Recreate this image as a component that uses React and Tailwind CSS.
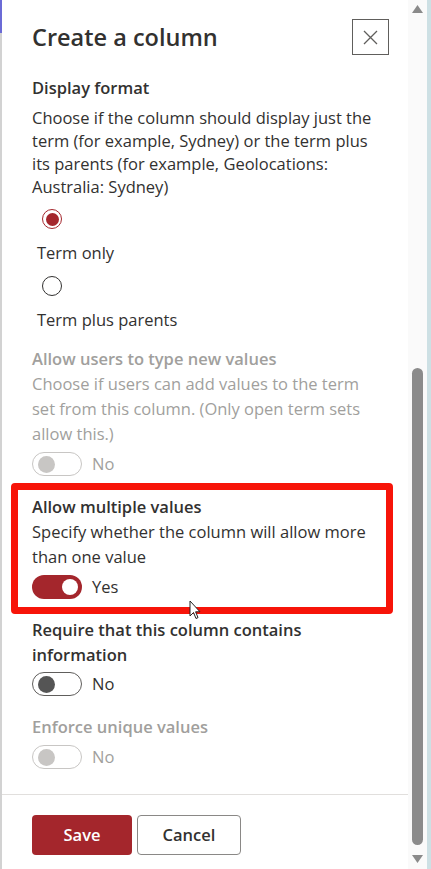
import React from "react";

const font = { fontFamily: '"Segoe UI", "Open Sans", "Noto Sans", sans-serif' };

function Toggle({ state }) {
  if (state === "on") {
    return (
      <div className="w-[50px] h-[24px] rounded-full bg-[#a4262c] flex items-center justify-end pr-[4px]">
        <div className="w-[16px] h-[16px] rounded-full bg-white" />
      </div>
    );
  }
  if (state === "off") {
    return (
      <div className="w-[50px] h-[24px] rounded-full border border-[#605e5c] bg-white flex items-center pl-[5px]">
        <div className="w-[17px] h-[17px] rounded-full bg-[#555555]" />
      </div>
    );
  }
  return (
    <div className="w-[50px] h-[24px] rounded-full border border-[#c8c6c4] bg-white flex items-center pl-[5px]">
      <div className="w-[17px] h-[17px] rounded-full bg-[#c8c6c4]" />
    </div>
  );
}

function ToggleRow({ state, label }) {
  const color = state === "disabled" ? "text-[#a19f9d]" : "text-[#323130]";
  return (
    <div className="flex items-center gap-[10px] h-[24px]">
      <Toggle state={state} />
      <span className={`text-[16.5px] leading-[24px] ${color}`}>{label}</span>
    </div>
  );
}

export default function App() {
  return (
    <div className="w-[431px] h-[869px] flex bg-white overflow-hidden relative" style={font}>
      {/* left page edge */}
      <div className="w-[2px] h-full bg-[#d2d2d2] flex flex-col">
        <div className="h-[33px] bg-[#6b6bd6]" />
      </div>

      {/* panel */}
      <div className="w-[406px] h-full flex flex-col bg-white">
        <div className="h-[794px] pl-[30px] flex flex-col">
          {/* header */}
          <div className="flex justify-between items-start pt-[19px] pr-[19px]">
            <h1 className="text-[23.5px] leading-[36px] font-semibold text-[#323130]">Create a column</h1>
            <button className="w-[37px] h-[36px] border border-[#605e5c] flex items-center justify-center bg-white">
              <svg width="15" height="15" viewBox="0 0 15 15" fill="none" stroke="#605e5c" strokeWidth="1.3">
                <path d="M1 1 L14 14 M14 1 L1 14" />
              </svg>
            </button>
          </div>

          {/* Display format */}
          <div className="mt-[21px] text-[16.5px] leading-[24px] font-semibold text-[#323130]">Display format</div>
          <div className="mt-[6px] text-[16.5px] leading-[23px] text-[#323130]">
            <div>Choose if the column should display just the</div>
            <div>term (for example, Sydney) or the term plus</div>
            <div>its parents (for example, Geolocations:</div>
            <div>Australia: Sydney)</div>
          </div>

          <div className="mt-[11px] ml-[10px] w-[20px] h-[20px] rounded-full border border-[#a4262c] flex items-center justify-center">
            <div className="w-[13px] h-[13px] rounded-full bg-[#a4262c]" />
          </div>
          <div className="mt-[12px] ml-[5px] text-[16.5px] leading-[24px] text-[#323130]">Term only</div>
          <div className="mt-[11px] ml-[10px] w-[20px] h-[20px] rounded-full border border-[#323130]" />
          <div className="mt-[12px] ml-[5px] text-[16.5px] leading-[24px] text-[#323130]">Term plus parents</div>

          {/* Allow users to type new values */}
          <div className="mt-[15px] text-[16.5px] leading-[24px] font-semibold text-[#a19f9d]">Allow users to type new values</div>
          <div className="text-[16.5px] leading-[25px] text-[#a19f9d]">
            <div>Choose if users can add values to the term</div>
            <div>set from this column. (Only open term sets</div>
            <div>allow this.)</div>
          </div>
          <div className="mt-[6px]">
            <ToggleRow state="disabled" label="No" />
          </div>

          {/* Allow multiple values (highlighted) */}
          <div className="relative mt-[19px]">
            <div className="absolute left-[-21px] top-[-12px] w-[382px] h-[131px] border-[7px] border-[#f71409] rounded-[4px] pointer-events-none" />
            <div className="text-[16.5px] leading-[24px] font-semibold text-[#323130]">Allow multiple values</div>
            <div className="text-[16.5px] leading-[25px] text-[#323130]">
              <div>Specify whether the column will allow more</div>
              <div>than one value</div>
            </div>
            <div className="mt-[6px]">
              <ToggleRow state="on" label="Yes" />
            </div>
          </div>

          {/* Require */}
          <div className="mt-[18px] text-[16.5px] leading-[25px] font-semibold text-[#323130]">
            <div>Require that this column contains</div>
            <div>information</div>
          </div>
          <div className="mt-[5px]">
            <ToggleRow state="off" label="No" />
          </div>

          {/* Enforce unique */}
          <div className="mt-[19px] text-[16.5px] leading-[24px] font-semibold text-[#a19f9d]">Enforce unique values</div>
          <div className="mt-[6px]">
            <ToggleRow state="disabled" label="No" />
          </div>
        </div>

        {/* footer */}
        <div className="border-t border-[#e1dfdd] pt-[20px] pl-[30px] flex gap-[5px]">
          <button className="w-[100px] h-[40px] rounded-[4px] bg-[#a4262c] text-white text-[16.5px] font-semibold">Save</button>
          <button className="w-[104px] h-[40px] rounded-[4px] border border-[#8a8886] bg-white text-[#323130] text-[16.5px] font-semibold">Cancel</button>
        </div>
      </div>

      {/* scrollbar */}
      <div className="w-[19px] h-full bg-[#fafafa] flex flex-col items-center">
        <svg width="11" height="8" viewBox="0 0 11 8" className="mt-[5px]">
          <path d="M5.5 0 L11 8 L0 8 Z" fill="#8a8a8a" />
        </svg>
        <div className="mt-[355px] w-[11px] h-[477px] rounded-full bg-[#8b8b8b]" />
        <svg width="11" height="8" viewBox="0 0 11 8" className="mt-[10px]">
          <path d="M0 0 L11 0 L5.5 8 Z" fill="#8a8a8a" />
        </svg>
      </div>

      {/* right edge */}
      <div className="w-[4px] h-full bg-[#cde0e4]" />

      {/* mouse cursor */}
      <svg className="absolute left-[189px] top-[600px]" width="12" height="20" viewBox="0 0 12 20">
        <path d="M1 1 L1 16 L4.5 12.5 L7 18.5 L9 17.6 L6.6 11.8 L11 11.8 Z" fill="white" stroke="#222" strokeWidth="1" strokeLinejoin="round" />
      </svg>
    </div>
  );
}
